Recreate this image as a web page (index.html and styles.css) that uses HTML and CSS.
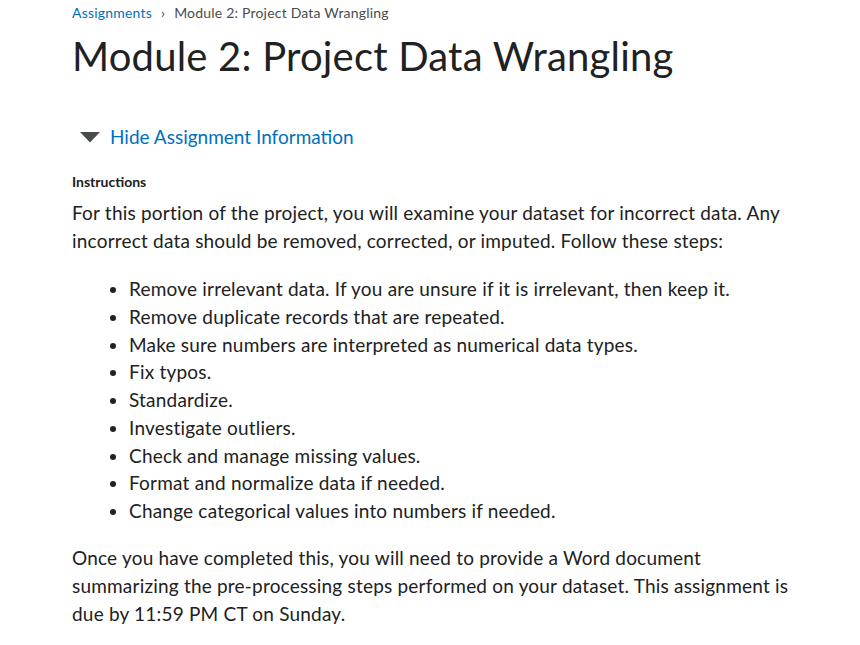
FILE: index.html
```html
<!DOCTYPE html>
<html>
<head>
<meta charset="utf-8">
<link rel="stylesheet" href="styles.css">
</head>
<body>
<div class="page">
  <nav class="crumbs">
    <a class="crumb-link" href="#">Assignments</a>
    <span class="crumb-sep">›</span>
    <span class="crumb-current">Module 2: Project Data Wrangling</span>
  </nav>
  <h1 class="title">Module 2: Project Data Wrangling</h1>
  <button class="toggle">
    <svg class="toggle-icon" width="20" height="11" viewBox="0 0 20 11"><path d="M0 0 L20 0 L10 10.5 Z" fill="#494c4e"/></svg>
    <span class="toggle-text">Hide Assignment Information</span>
  </button>
  <div class="label">Instructions</div>
  <p class="para">For this portion of the project, you will examine your dataset for incorrect data. Any incorrect data should be removed, corrected, or imputed. Follow these steps:</p>
  <ul class="steps">
    <li>Remove irrelevant data. If you are unsure if it is irrelevant, then keep it.</li>
    <li>Remove duplicate records that are repeated.</li>
    <li>Make sure numbers are interpreted as numerical data types.</li>
    <li>Fix typos.</li>
    <li>Standardize.</li>
    <li>Investigate outliers.</li>
    <li>Check and manage missing values.</li>
    <li>Format and normalize data if needed.</li>
    <li>Change categorical values into numbers if needed.</li>
  </ul>
  <p class="para">Once you have completed this, you will need to provide a Word document summarizing the pre-processing steps performed on your dataset. This assignment is due by 11:59 PM CT on Sunday.</p>
</div>
</body>
</html>
```
FILE: styles.css
```css
html, body {
  margin: 0;
  padding: 0;
  background: #ffffff;
}
body {
  font-family: Lato, "Noto Sans", sans-serif;
  color: #202122;
}
.page {
  padding: 4px 0 0 72px;
  width: 730px;
}
.crumbs {
  font-size: 14px;
  letter-spacing: 0.2px;
  line-height: 18px;
  display: flex;
  align-items: center;
  gap: 9px;
}
.crumb-link {
  color: #006fbf;
  text-decoration: none;
}
.crumb-sep {
  color: #494c4e;
  font-size: 14px;
}
.crumb-current {
  color: #494c4e;
}
.title {
  font-size: 40px;
  font-weight: 400;
  letter-spacing: 0.2px;
  line-height: 50px;
  margin: 9px 0 0 0;
  color: #202122;
}
.toggle {
  display: flex;
  align-items: center;
  gap: 10px;
  border: none;
  background: none;
  padding: 0 0 0 8px;
  margin: 44px 0 0 0;
  font-family: inherit;
  cursor: pointer;
}
.toggle-icon {
  display: block;
  margin-top: 1px;
}
.toggle-text {
  font-size: 19px;
  line-height: 24px;
  color: #006fbf;
}
.label {
  font-size: 14px;
  font-weight: 700;
  line-height: 18px;
  margin-top: 24px;
}
.para {
  font-size: 19px;
  letter-spacing: 0.2px;
  line-height: 28px;
  margin: 8px 0 0 0;
}
.steps {
  font-size: 19px;
  letter-spacing: 0.2px;
  line-height: 27.75px;
  margin: 20px 0 0 0;
  padding-left: 57px;
}
.steps + .para {
  margin-top: 19px;
}
```
